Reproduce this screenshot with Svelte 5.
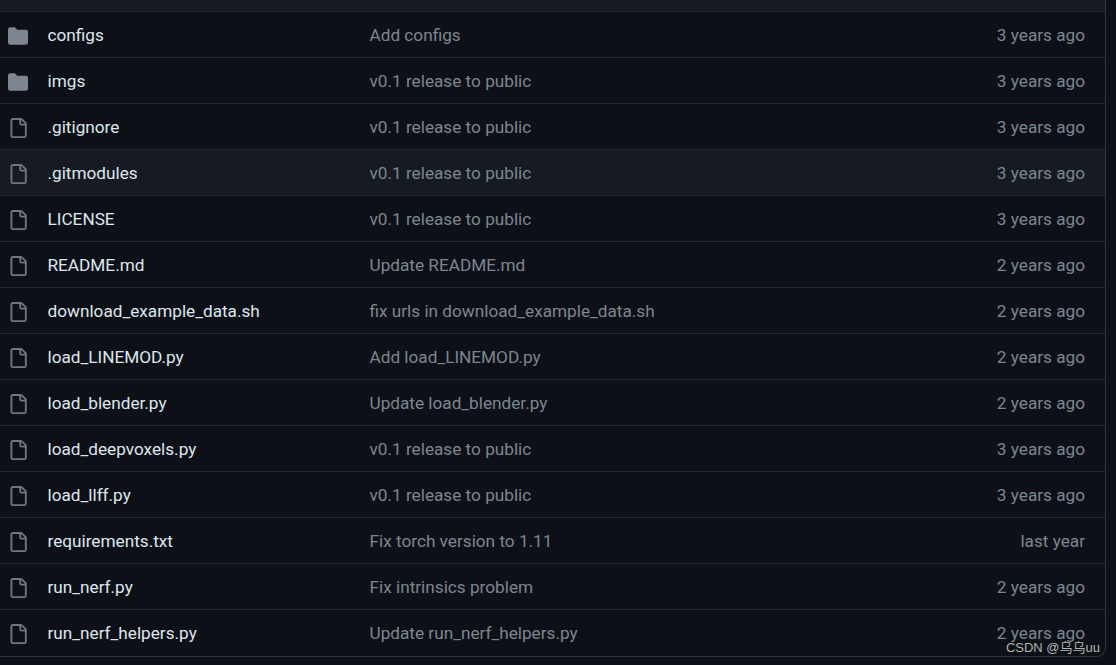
<script lang="ts">
  const rows = [
    { name: 'configs', dir: true, msg: 'Add configs', age: '3 years ago' },
    { name: 'imgs', dir: true, msg: 'v0.1 release to public', age: '3 years ago' },
    { name: '.gitignore', msg: 'v0.1 release to public', age: '3 years ago' },
    { name: '.gitmodules', msg: 'v0.1 release to public', age: '3 years ago', hover: true },
    { name: 'LICENSE', msg: 'v0.1 release to public', age: '3 years ago' },
    { name: 'README.md', msg: 'Update README.md', age: '2 years ago' },
    { name: 'download_example_data.sh', msg: 'fix urls in download_example_data.sh', age: '2 years ago' },
    { name: 'load_LINEMOD.py', msg: 'Add load_LINEMOD.py', age: '2 years ago' },
    { name: 'load_blender.py', msg: 'Update load_blender.py', age: '2 years ago' },
    { name: 'load_deepvoxels.py', msg: 'v0.1 release to public', age: '3 years ago' },
    { name: 'load_llff.py', msg: 'v0.1 release to public', age: '3 years ago' },
    { name: 'requirements.txt', msg: 'Fix torch version to 1.11', age: 'last year' },
    { name: 'run_nerf.py', msg: 'Fix intrinsics problem', age: '2 years ago' },
    { name: 'run_nerf_helpers.py', msg: 'Update run_nerf_helpers.py', age: '2 years ago' }
  ];
</script>

<main class="page">
  <div class="files">
    <div class="top-strip"></div>
    {#each rows as row}
      <div class="row" class:hover={row.hover}>
        {#if row.dir}
          <svg class="icon" viewBox="0 0 16 16" aria-hidden="true">
            <path fill="#7d8590" d="M1.75 1A1.75 1.75 0 0 0 0 2.75v10.5C0 14.216.784 15 1.75 15h12.5A1.75 1.75 0 0 0 16 13.25v-8.5A1.75 1.75 0 0 0 14.25 3H7.5a.25.25 0 0 1-.2-.1l-.9-1.2C6.07 1.26 5.55 1 5 1H1.75Z" />
          </svg>
        {:else}
          <svg class="icon" viewBox="0 0 16 16" aria-hidden="true">
            <path fill="#6e7681" d="M2 1.75C2 .784 2.784 0 3.75 0h6.586c.464 0 .909.184 1.237.513l2.914 2.914c.329.328.513.773.513 1.237v9.586A1.75 1.75 0 0 1 13.25 16h-9.5A1.75 1.75 0 0 1 2 14.25Zm1.75-.25a.25.25 0 0 0-.25.25v12.5c0 .138.112.25.25.25h9.5a.25.25 0 0 0 .25-.25V6h-2.75A1.75 1.75 0 0 1 9 4.25V1.5Zm6.75.062V4.25c0 .138.112.25.25.25h2.688l-.011-.013-2.914-2.914-.013-.011Z" />
          </svg>
        {/if}
        <span class="name">{row.name}</span>
        <span class="msg">{row.msg}</span>
        <span class="age">{row.age}</span>
      </div>
    {/each}
  </div>
  <span class="mark">CSDN @乌乌uu</span>
</main>

<style>
  :global(body) {
    margin: 0;
    background: #0d1117;
  }

  .page {
    position: relative;
    width: 1116px;
    height: 665px;
    overflow: hidden;
    background: #0d1117;
    font-family: Roboto, 'Noto Sans', sans-serif;
    font-size: 17.2px;
  }

  .files {
    width: 1106px;
    height: 657px;
    box-sizing: border-box;
    border-right: 1px solid #30363d;
    border-bottom: 1px solid #30363d;
    border-bottom-right-radius: 9px;
    overflow: hidden;
  }

  .top-strip {
    height: 11px;
    background: #161b22;
  }

  .row {
    height: 46px;
    box-sizing: border-box;
    display: flex;
    align-items: center;
    border-top: 1px solid #21262d;
    padding-left: 8px;
  }

  .row.hover {
    background: #161b22;
  }

  .icon {
    width: 20px;
    height: 20px;
    margin-top: 2px;
    flex-shrink: 0;
  }

  .name {
    width: 322px;
    margin-left: 19.5px;
    padding-top: 1px;
    color: #dfe6ed;
  }

  .msg {
    padding-top: 1px;
    color: #7d8590;
  }

  .age {
    margin-left: auto;
    padding-top: 1px;
    padding-right: 20px;
    color: #7d8590;
  }

  .mark {
    position: absolute;
    right: 16px;
    bottom: 9px;
    color: #b4b4b4;
    font-family: 'Liberation Sans', 'Noto Sans CJK SC', sans-serif;
    font-size: 13px;
  }
</style>
